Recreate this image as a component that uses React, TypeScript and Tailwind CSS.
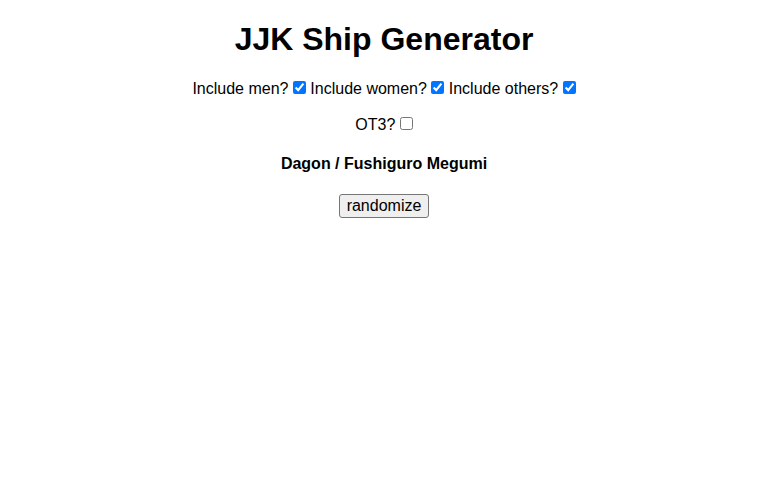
import { useState } from 'react';

const pool = [
  'Dagon / Fushiguro Megumi',
  'Gojo Satoru / Geto Suguru',
  'Itadori Yuji / Fushiguro Megumi',
  'Kugisaki Nobara / Zenin Maki',
];

export default function App() {
  const [men, setMen] = useState(true);
  const [women, setWomen] = useState(true);
  const [others, setOthers] = useState(true);
  const [ot3, setOt3] = useState(false);
  const [ship, setShip] = useState(pool[0]);

  const randomize = () => setShip(pool[Math.floor(Math.random() * pool.length)]);

  return (
    <div className="min-h-screen bg-white text-center text-base leading-[normal] text-black font-['Liberation_Sans',Arial,sans-serif]">
      <h1 className="pt-[21.44px] mb-[19.44px] text-[32px] font-bold leading-[37px]">JJK Ship Generator</h1>
      <p className="my-4">
        Include men?{' '}
        <input type="checkbox" className="my-[3px] mx-0" checked={men} onChange={() => setMen(!men)} />{' '}
        Include women?{' '}
        <input type="checkbox" className="my-[3px] mx-0" checked={women} onChange={() => setWomen(!women)} />{' '}
        Include others?{' '}
        <input type="checkbox" className="my-[3px] mx-0" checked={others} onChange={() => setOthers(!others)} />
      </p>
      <p className="my-4">
        OT3?{' '}
        <input type="checkbox" className="my-[3px] mx-0" checked={ot3} onChange={() => setOt3(!ot3)} />
      </p>
      <h4 className="my-[21.28px] font-bold">{ship}</h4>
      <button
        onClick={randomize}
        className="rounded-[3px] border border-[#767676] bg-[#efefef] px-[7px] py-[1px] text-base leading-[20px] hover:bg-[#e5e5e5]"
      >
        randomize
      </button>
    </div>
  );
}
